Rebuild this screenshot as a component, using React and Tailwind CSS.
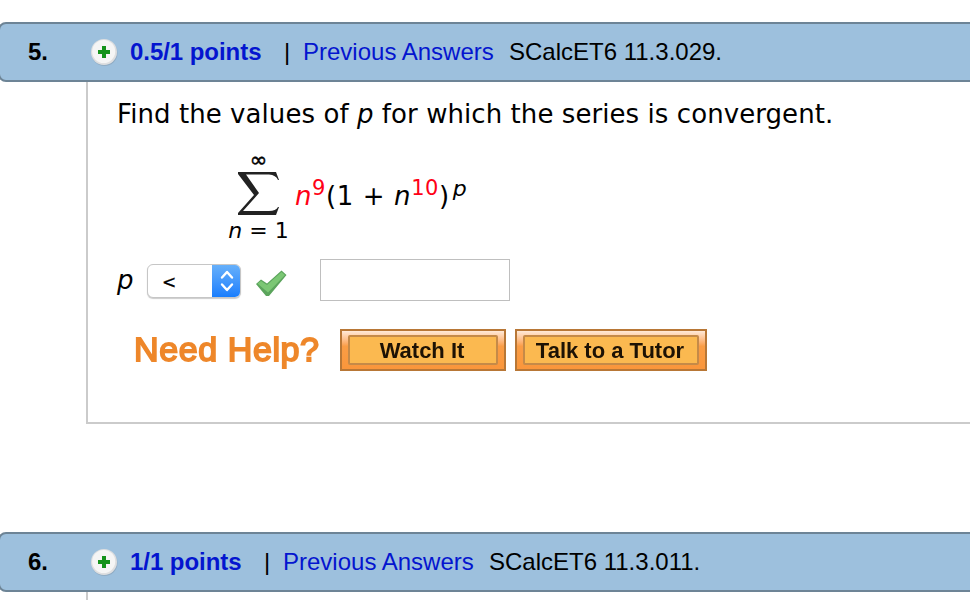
import React from "react";

const PlusBadge = () => (
  <svg width="28" height="28" viewBox="0 0 28 28" className="shrink-0">
    <circle cx="14.5" cy="15" r="13" fill="#8093a3" opacity="0.45" />
    <circle cx="14" cy="14" r="13" fill="#dedfe0" />
    <circle cx="13.7" cy="13.5" r="11.5" fill="#f5f5f5" />
    <path d="M12 8h4v4h4v4h-4v4h-4v-4H8v-4h4z" fill="#14921a" />
  </svg>
);

const QuestionHeader = ({ number, points, pointsClass, name }) => (
  <div className="-mx-[2px] flex h-[60px] items-center rounded-l-lg border-2 border-[#6d8496] bg-[#9dc0dd] pb-px font-['Liberation_Sans',Arial,sans-serif] text-2xl whitespace-nowrap text-black">
    <span className="w-[62px] pl-7 font-bold">{number}.</span>
    <span className="ml-7">
      <PlusBadge />
    </span>
    <a className={`ml-3 font-bold tracking-[-0.05px] text-[#0415cf] ${pointsClass}`}>{points}</a>
    <span className="w-[41px] pl-[22px]">|</span>
    <a className="w-[206px] text-[#0415cf]">Previous Answers</a>
    <span>{name}</span>
  </div>
);

const SumSymbol = () => (
  <svg width="42" height="45" viewBox="0 0 42 45">
    <path
      d="M0 1H38L41 9H40Q38 4 31 3.5H8L21 22L5 40H31Q38 40 40 36H41L38 44H0V42L16 24L0 3Z"
      fill="#222"
    />
  </svg>
);

const Formula = () => (
  <div className="flex h-[92px] pl-[111px]">
    <div className="flex w-[61px] flex-col items-center">
      <span className="h-[17px] text-[21px] leading-[13px] [-webkit-text-stroke:0.5px_black]">∞</span>
      <SumSymbol />
      <span className="h-[27px] text-[22px] leading-[30px] whitespace-nowrap">
        <i>n</i> = 1
      </span>
    </div>
    <div className="pt-[27px] pl-[6px] text-[26px] leading-[30px] tracking-[0.6px] whitespace-nowrap">
      <i className="text-[#ff0016]">n</i>
      <span className="relative -top-[10px] text-[21px] text-[#ff0016]">9</span>
      (1 + <i>n</i>
      <span className="relative -top-[10px] text-[21px] text-[#ff0016]">10</span>)
      <i className="relative -top-[9px] ml-[3px] text-[22px]">p</i>
    </div>
  </div>
);

const CompareSelect = () => (
  <button
    type="button"
    className="mt-px flex h-[34px] w-[94px] overflow-hidden rounded-md border border-[#c6c6c6] bg-white shadow-[0_1px_1px_#ccc]"
  >
    <span className="flex-1 pl-[14px] text-left text-[17px] leading-[34px] [-webkit-text-stroke:0.3px_black]">
      &lt;
    </span>
    <span className="-my-px -mr-px flex h-[34px] w-[29px] items-center justify-center bg-linear-to-b from-[#68b1fa] to-[#147cfd]">
      <svg
        width="14"
        height="22"
        viewBox="0 0 14 22"
        fill="none"
        stroke="#fff"
        strokeWidth="2.4"
        strokeLinecap="round"
        strokeLinejoin="round"
      >
        <path d="M2 7.5L7 2L12 7.5M2 14.5L7 20L12 14.5" />
      </svg>
    </span>
  </button>
);

const CheckMark = () => (
  <svg width="32" height="27" viewBox="0 0 32 27" className="blur-[0.4px]">
    <path d="M1 14L6 9.5L12 13.5L26.5 0.5L31.5 5L14 26H11Z" fill="#5ba45c" />
    <path d="M2.5 13.5L6 11L12 15L26.5 2L30 5L13 22.5Z" fill="#7bc774" />
  </svg>
);

const HelpButton = ({ label, className }) => (
  <button
    type="button"
    className={`h-[42px] border-2 border-[#b87736] bg-linear-to-b from-[#ffe9d7] via-[#fa9d45] via-40% to-[#fa963b] px-[6px] py-1 ${className}`}
  >
    <span className="flex h-full items-center justify-center rounded-xs border-2 border-[#c58a48] bg-[#fbb950] pt-[2px] pr-[2px] font-['Liberation_Sans',Arial,sans-serif] text-[22px] leading-[26px] font-bold whitespace-nowrap text-[#1d1204]">
      <span className="blur-[0.5px]">{label}</span>
    </span>
  </button>
);

const App = () => {
  return (
    <div className="h-[600px] w-[970px] overflow-hidden bg-white pt-[22px] font-['DejaVu_Sans',Verdana,sans-serif] text-black">
      <QuestionHeader
        number={5}
        points="0.5/1 points"
        pointsClass="w-[132px]"
        name="SCalcET6 11.3.029."
      />
      <div className="ml-[86px] h-[342px] border-b-2 border-l-2 border-[#cbcbcb] pt-[16px] pl-[29px]">
        <p className="h-[56px] text-[26px] leading-[32px] tracking-[0.07px] whitespace-nowrap">
          Find the values of <i>p</i> for which the series is convergent.
        </p>
        <Formula />
        <div className="mt-[13px] flex h-[42px] items-center">
          <i className="w-[30px] text-[26px] leading-[40px]">p</i>
          <CompareSelect />
          <span className="ml-[14px] pt-[6px]">
            <CheckMark />
          </span>
          <input type="text" className="ml-[33px] h-[42px] w-[190px] border border-[#bfbfbf] px-2" />
        </div>
        <div className="mt-7 flex h-[42px] items-center">
          <span className="w-[223px] pb-[2px] pl-[17px] font-['Liberation_Sans',Arial,sans-serif] text-[34px] leading-[40px] tracking-[0.6px] whitespace-nowrap text-[#ee872a] blur-[0.5px] [-webkit-text-stroke:1.8px_#ee872a]">
            Need Help?
          </span>
          <HelpButton label="Watch It" className="w-[166px]" />
          <HelpButton label="Talk to a Tutor" className="ml-[9px] w-[192px]" />
        </div>
      </div>
      <div className="mt-[108px]">
        <QuestionHeader
          number={6}
          points="1/1 points"
          pointsClass="w-[112px]"
          name="SCalcET6 11.3.011."
        />
        <div className="ml-[86px] h-[40px] border-l-2 border-[#cbcbcb]" />
      </div>
    </div>
  );
};

export default App;
